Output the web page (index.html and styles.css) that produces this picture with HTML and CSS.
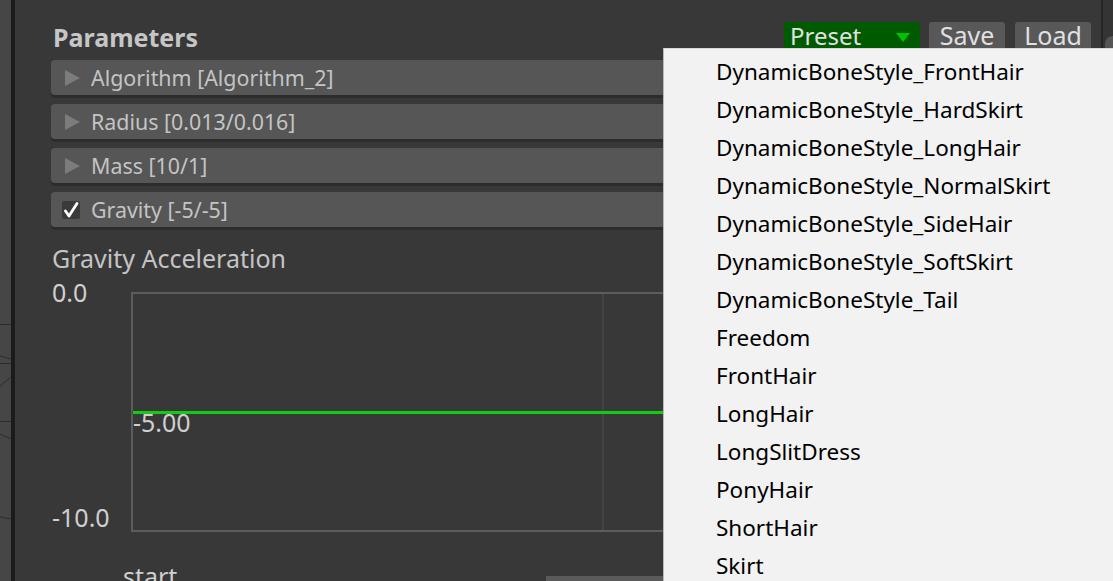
FILE: index.html
```html
<!DOCTYPE html>
<html>
<head>
<meta charset="utf-8">
<link rel="stylesheet" href="styles.css">
</head>
<body>
<div class="app">
  <div class="graph-strip">
    <svg width="11" height="581" viewBox="0 0 11 581">
      <g stroke="#2c2c2c" stroke-width="1" fill="none">
        <line x1="0" y1="324.5" x2="11" y2="324.5"/>
        <line x1="0" y1="356" x2="11" y2="359"/>
        <line x1="0" y1="363.5" x2="11" y2="363.5"/>
        <line x1="0" y1="386" x2="11" y2="377"/>
        <line x1="0" y1="421.5" x2="11" y2="421.5"/>
        <line x1="0" y1="434" x2="11" y2="439"/>
        <line x1="0" y1="517" x2="11" y2="519"/>
      </g>
    </svg>
  </div>
  <div class="divider"></div>
  <div class="panel">
    <div class="header">
      <div class="title">Parameters</div>
      <div class="toolbar">
        <div class="btn preset">Preset <span class="caret"></span></div>
        <div class="btn">Save</div>
        <div class="btn">Load</div>
      </div>
    </div>
    <div class="rows">
      <div class="row"><span class="tri"></span><span class="label">Algorithm [Algorithm_2]</span></div>
      <div class="row"><span class="tri"></span><span class="label">Radius [0.013/0.016]</span></div>
      <div class="row"><span class="tri"></span><span class="label">Mass [10/1]</span></div>
      <div class="row"><span class="check"><svg width="16" height="16" viewBox="0 0 16 16"><path d="M2.5 9 L6 14 L14 1.5" stroke="#ffffff" stroke-width="2.8" fill="none" stroke-linejoin="round" stroke-linecap="round"/></svg></span><span class="label">Gravity [-5/-5]</span></div>
    </div>
    <div class="section-title">Gravity Acceleration</div>
    <div class="chart">
      <div class="yaxis">
        <span class="ytop">0.0</span>
        <span class="ybot">-10.0</span>
      </div>
      <div class="plot">
        <div class="vgrid"></div>
        <div class="curve"></div>
        <span class="curve-val">-5.00</span>
      </div>
    </div>
    <div class="footer">
      <span class="start">start</span>
      <div class="scroll"></div>
    </div>
  </div>
  <div class="right-strip">
    <div class="knob"></div>
  </div>
</div>
<div class="menu">
  <div class="item">DynamicBoneStyle_FrontHair</div>
  <div class="item">DynamicBoneStyle_HardSkirt</div>
  <div class="item">DynamicBoneStyle_LongHair</div>
  <div class="item">DynamicBoneStyle_NormalSkirt</div>
  <div class="item">DynamicBoneStyle_SideHair</div>
  <div class="item">DynamicBoneStyle_SoftSkirt</div>
  <div class="item">DynamicBoneStyle_Tail</div>
  <div class="item">Freedom</div>
  <div class="item">FrontHair</div>
  <div class="item">LongHair</div>
  <div class="item">LongSlitDress</div>
  <div class="item">PonyHair</div>
  <div class="item">ShortHair</div>
  <div class="item">Skirt</div>
</div>
</body>
</html>
```
FILE: styles.css
```css
html, body {
  margin: 0;
  padding: 0;
  width: 1113px;
  height: 581px;
  overflow: hidden;
  background: #383838;
  font-family: "Noto Sans", "Open Sans", sans-serif;
}
.app {
  display: flex;
  height: 581px;
}
.graph-strip {
  width: 11px;
  background: #464646;
  flex: none;
}
.graph-strip svg { display: block; }
.divider {
  width: 4px;
  background: #1b1b1b;
  flex: none;
}
.panel {
  flex: 1;
  padding: 22px 10px 0 36px;
  display: flex;
  flex-direction: column;
  min-width: 0;
}
.header {
  display: flex;
  justify-content: space-between;
  align-items: flex-start;
  height: 30px;
}
.title {
  color: #c6c6c6;
  font-weight: bold;
  font-size: 25px;
  line-height: 30px;
  padding-left: 2px;
}
.toolbar {
  display: flex;
  gap: 10px;
}
.btn {
  height: 30px;
  width: 76px;
  box-sizing: border-box;
  background: #585858;
  border-radius: 3px;
  color: #e0e0e0;
  font-size: 25px;
  line-height: 27px;
  text-align: center;
}
.btn.preset {
  width: 136px;
  background: #005a00;
  text-align: left;
  padding-left: 6px;
  position: relative;
  margin-right: -1px;
  font-size: 24px;
}
.caret {
  position: absolute;
  left: 112px;
  top: 11px;
  width: 0;
  height: 0;
  border-left: 7px solid transparent;
  border-right: 7px solid transparent;
  border-top: 9px solid #00c400;
}
.rows {
  margin-top: 8px;
  display: flex;
  flex-direction: column;
  gap: 6px;
}
.row {
  height: 35px;
  background: #565656;
  border-radius: 4px;
  box-shadow: 0 3px 0 #2c2c2c;
  margin-bottom: 3px;
  display: flex;
  align-items: center;
  color: #c4c4c4;
  font-size: 21.4px;
}
.tri {
  width: 0;
  height: 0;
  margin-left: 14px;
  border-top: 8px solid transparent;
  border-bottom: 8px solid transparent;
  border-left: 15px solid #7c7c7c;
  margin-right: 11px;
}
.check {
  width: 18px;
  height: 18px;
  margin-left: 11px;
  margin-right: 11px;
  background: #3a3a3a;
  border-radius: 2px;
  display: flex;
  align-items: center;
  justify-content: center;
}
.check svg { display: block; }
.label { white-space: nowrap; }
.section-title {
  margin-top: 13px;
  color: #c4c4c4;
  font-size: 25px;
  line-height: 30px;
  padding-left: 1px;
}
.chart {
  display: flex;
  margin-top: 2px;
  height: 257px;
}
.yaxis {
  width: 80px;
  flex: none;
  display: flex;
  flex-direction: column;
  justify-content: space-between;
  color: #cfcfcf;
  font-size: 25px;
  line-height: 30px;
  padding-left: 1px;
  box-sizing: border-box;
}
.ytop { margin-top: 2px; }
.ybot { margin-bottom: 0; }
.plot {
  flex: 1;
  border: 2px solid #5c5c5c;
  position: relative;
  margin-top: 17px;
  margin-right: 20px;
}
.vgrid {
  position: absolute;
  left: 469px;
  top: 0;
  bottom: 0;
  width: 2px;
  background: #444444;
}
.curve {
  position: absolute;
  left: 0;
  right: 0;
  top: 117px;
  height: 3px;
  background: #1fc21f;
  box-shadow: 0 0 0 0.5px #0f5f0f;
}
.curve-val {
  position: absolute;
  left: 0;
  top: 113px;
  color: #cfcfcf;
  font-size: 25px;
  line-height: 30px;
}
.footer {
  position: relative;
  flex: 1;
}
.start {
  position: absolute;
  left: 72px;
  top: 29px;
  color: #cfcfcf;
  font-size: 25px;
  line-height: 30px;
}
.scroll {
  position: absolute;
  left: 495px;
  right: 0;
  top: 44px;
  height: 5px;
  background: #5a5a5a;
}
.right-strip {
  width: 10px;
  flex: none;
  background: #343434;
  border-left: 2px solid #262626;
  position: relative;
}
.knob {
  position: absolute;
  left: 2px;
  top: 36px;
  width: 20px;
  height: 30px;
  border-radius: 8px;
  background: #555555;
}
.menu {
  position: absolute;
  left: 663px;
  top: 48px;
  right: 0;
  bottom: 0;
  background: #f2f2f2;
  border-left: 1px solid #b9b9b9;
  border-top: 1px solid #d8d8d8;
  padding-top: 4px;
  padding-left: 52px;
  font-family: "Noto Sans", "Open Sans", sans-serif;
  font-size: 22.5px;
  color: #000000;
}
.item {
  height: 38px;
  line-height: 38px;
  white-space: nowrap;
}
```
